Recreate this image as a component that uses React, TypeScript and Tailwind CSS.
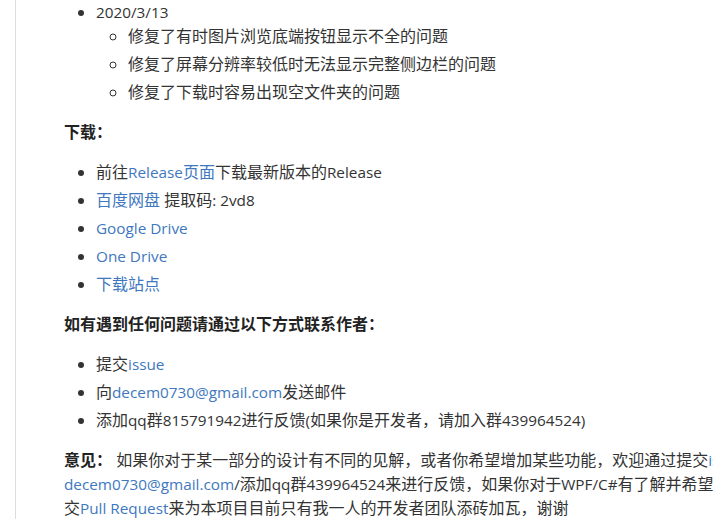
const FONT = '"Open Sans", "Noto Sans CJK SC", sans-serif'

// Latin runs are set a touch smaller so they keep the narrower widths of the original UI font
function E({ children }: { children: React.ReactNode }) {
  return <span className="text-[15.3px]">{children}</span>
}

function A({ children }: { children: React.ReactNode }) {
  return <a className="text-[#4078c0]">{children}</a>
}

export default function App() {
  return (
    <div className="h-[519px] w-[713px] overflow-hidden bg-white" style={{ fontFamily: FONT }}>
      <div className="ml-[15px] h-full border-l border-[#dddddd] pl-[48px] text-[16px] leading-6 text-[#333333]">
        <ul className="list-disc pl-8">
          <li>
            <E>2020/3/13</E>
            <ul className="list-[circle] pl-8">
              <li>修复了有时图片浏览底端按钮显示不全的问题</li>
              <li className="mt-1">修复了屏幕分辨率较低时无法显示完整侧边栏的问题</li>
              <li className="mt-1">修复了下载时容易出现空文件夹的问题</li>
            </ul>
          </li>
        </ul>

        <p className="mt-4 font-bold text-[#222222]">下载：</p>
        <ul className="mt-4 list-disc pl-8">
          <li>
            前往<A><E>Release</E>页面</A>下载最新版本的<E>Release</E>
          </li>
          <li className="mt-1">
            <A>百度网盘</A> 提取码<E>: 2vd8</E>
          </li>
          <li className="mt-1">
            <A><E>Google Drive</E></A>
          </li>
          <li className="mt-1">
            <A><E>One Drive</E></A>
          </li>
          <li className="mt-1">
            <A>下载站点</A>
          </li>
        </ul>

        <p className="mt-4 font-bold text-[#222222]">如有遇到任何问题请通过以下方式联系作者：</p>
        <ul className="mt-4 list-disc pl-8">
          <li>
            提交<A><E>issue</E></A>
          </li>
          <li className="mt-1">
            向<A><E>decem0730@gmail.com</E></A>发送邮件
          </li>
          <li className="mt-1">
            添加<E>qq</E>群<E>815791942</E>进行反馈<E>(</E>如果你是开发者，请加入群<E>439964524)</E>
          </li>
        </ul>

        <p className="mt-4 whitespace-nowrap">
          <strong className="text-[#222222]">意见：</strong> 如果你对于某一部分的设计有不同的见解，或者你希望增加某些功能，欢迎通过提交<A><E>issue</E></A>或发送邮件至
          <br />
          <A><E>decem0730@gmail.com</E></A><E>/</E>添加<E>qq</E>群<E>439964524</E>来进行反馈，如果你对于<E>WPF/C#</E>有了解并希望参与到开发中来，欢迎提
          <br />
          交<A><E>Pull Request</E></A>来为本项目目前只有我一人的开发者团队添砖加瓦，谢谢
        </p>
      </div>
    </div>
  )
}
